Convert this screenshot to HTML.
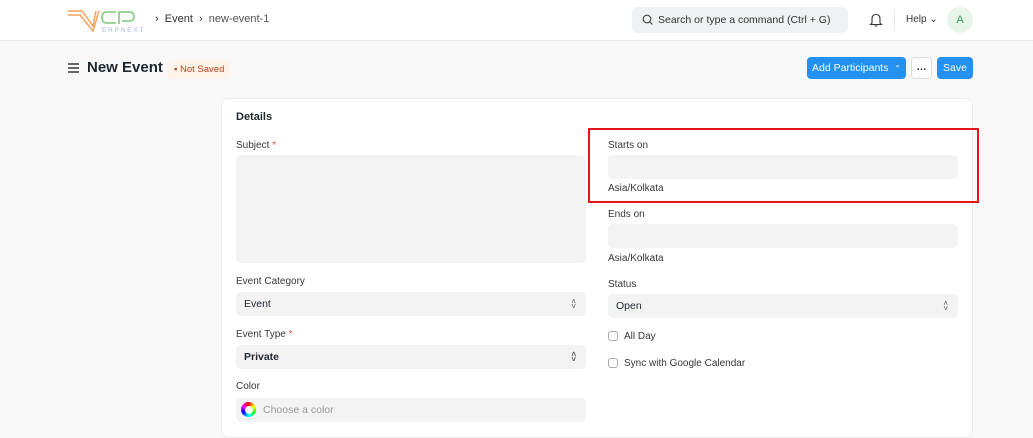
<!DOCTYPE html>
<html><head><meta charset="utf-8"><style>
*{box-sizing:border-box;margin:0;padding:0}
body{width:1033px;height:427px;overflow:hidden;background:#f8f8f8;font-family:"Liberation Sans",sans-serif;color:#1f272e;position:relative}
.a{position:absolute}
.nav{left:0;top:0;width:1033px;height:41px;background:#fff;border-bottom:1px solid #e8e8e8}
.lbl{font-size:10px;color:#383838}
.inp{background:#f3f3f4;border-radius:5px}
.card{left:221px;top:98px;width:752px;height:340px;background:#fff;border:1px solid #ececec;border-radius:8px}
.sel{font-size:10.5px;font-weight:bold;color:#1f272e;padding-left:8px;display:flex;align-items:center}
.arr{position:absolute;right:10px;top:50%;transform:translateY(-50%);font-size:8px;line-height:5px;color:#555;text-align:center}
.cb{width:10px;height:10px;border:1px solid #aaa;border-radius:3px;background:#fff}
.btn{background:#2490ef;color:#fff;font-size:10.5px;border-radius:4px;display:flex;align-items:center;justify-content:center}
</style></head><body>
<div class="a nav"></div>
<svg class="a" style="left:66px;top:8px" width="80" height="26" viewBox="0 0 80 26">
<path d="M2 3 L16 3 L27 18 L30 3 M2 7 L14 7 L27 23 L33 3" stroke="#f5a05a" stroke-width="1.4" fill="none"/>
<path d="M50 4 H41 Q36 4 36 9.5 Q36 15 41 15 H50 M53 16 V4 H63 Q68 4 68 8.5 Q68 13 63 13 H56" stroke="#8fd08c" stroke-width="1.8" fill="none"/>
<text x="36" y="24" font-size="6.5" fill="#a9b8e6" font-family="Liberation Sans" letter-spacing="1.8">ERPNEXT</text>
</svg>
<div class="a" style="left:155px;top:13px;font-size:11px;color:#333">›&nbsp; Event &nbsp;›&nbsp; <span style="color:#555">new-event-1</span></div>
<div class="a inp" style="left:632px;top:7px;width:216px;height:26px;background:#f0f1f2;font-size:10.5px;color:#333;padding:7px 0 0 26px">Search or type a command (Ctrl + G)</div>
<svg class="a" style="left:642px;top:14px" width="11" height="11"><circle cx="5" cy="5" r="3.8" stroke="#444" fill="none" stroke-width="1.1"/><path d="M8 8 L10.5 10.5" stroke="#444" stroke-width="1.1"/></svg>
<svg class="a" style="left:869px;top:12px" width="14" height="16"><path d="M3 11 V7 Q3 2.5 7 2.5 Q11 2.5 11 7 V11 L12.5 12.5 H1.5 Z M5.5 14 H8.5" stroke="#333" fill="none" stroke-width="1.1"/></svg>
<div class="a" style="left:894px;top:10px;width:1px;height:20px;background:#e5e5e5"></div>
<div class="a" style="left:906px;top:14px;font-size:10px;color:#333">Help ⌄</div>
<div class="a" style="left:947px;top:7px;width:26px;height:26px;border-radius:50%;background:#e6f4ea;color:#3aa05a;font-size:11px;text-align:center;line-height:26px">A</div>

<div class="a" style="left:68px;top:63px;width:11px;height:1.5px;background:#666;box-shadow:0 4px 0 #666,0 8px 0 #666"></div>
<div class="a" style="left:87px;top:59px;font-size:15px;font-weight:bold;color:#1f272e">New Event</div>
<div class="a" style="left:167px;top:60px;width:63px;height:19px;background:#fff3ea;border-radius:5px;font-size:9.5px;color:#b5451b;padding:4px 0 0 7px">▪ Not Saved</div>
<div class="a btn" style="left:807px;top:57px;width:99px;height:22px">Add Participants &nbsp;<span style="font-size:8px">⌃</span></div>
<div class="a" style="left:911px;top:57px;width:21px;height:22px;background:#fff;border:1px solid #ddd;border-radius:4px;text-align:center;font-size:10px;line-height:20px;font-weight:bold">…</div>
<div class="a btn" style="left:937px;top:57px;width:36px;height:22px">Save</div>

<div class="a card"></div>
<div class="a" style="left:236px;top:111px;font-size:11px;font-weight:bold">Details</div>

<div class="a lbl" style="left:236px;top:140px">Subject <span style="color:#e24c4c">*</span></div>
<div class="a inp" style="left:236px;top:155px;width:350px;height:108px"></div>
<div class="a lbl" style="left:236px;top:276px">Event Category</div>
<div class="a inp sel" style="left:236px;top:292px;width:350px;height:24px;font-weight:normal">Event<div class="arr">˄<br>˅</div></div>
<div class="a lbl" style="left:236px;top:329px">Event Type <span style="color:#e24c4c">*</span></div>
<div class="a inp sel" style="left:236px;top:345px;width:350px;height:24px">Private<div class="arr">˄<br>˅</div></div>
<div class="a lbl" style="left:236px;top:381px">Color</div>
<div class="a inp" style="left:236px;top:398px;width:350px;height:24px;font-size:10.5px;color:#999;padding:6px 0 0 27px">Choose a color</div>
<div class="a" style="left:241px;top:402px;width:15px;height:15px;border-radius:50%;background:conic-gradient(red,yellow,lime,cyan,blue,magenta,red)"><div style="margin:3.5px;width:8px;height:8px;border-radius:50%;background:#fff"></div></div>

<div class="a lbl" style="left:608px;top:140px">Starts on</div>
<div class="a inp" style="left:608px;top:155px;width:350px;height:24px"></div>
<div class="a lbl" style="left:608px;top:183px">Asia/Kolkata</div>
<div class="a lbl" style="left:608px;top:209px">Ends on</div>
<div class="a inp" style="left:608px;top:224px;width:350px;height:24px"></div>
<div class="a lbl" style="left:608px;top:253px">Asia/Kolkata</div>
<div class="a lbl" style="left:608px;top:279px">Status</div>
<div class="a inp sel" style="left:608px;top:294px;width:350px;height:24px;font-weight:normal">Open<div class="arr">˄<br>˅</div></div>
<div class="a cb" style="left:608px;top:331px"></div>
<div class="a lbl" style="left:624px;top:331px">All Day</div>
<div class="a cb" style="left:608px;top:358px"></div>
<div class="a lbl" style="left:624px;top:358px">Sync with Google Calendar</div>

<div class="a" style="left:588px;top:128px;width:391px;height:75px;border:2px solid #e8141c"></div>
</body></html>
